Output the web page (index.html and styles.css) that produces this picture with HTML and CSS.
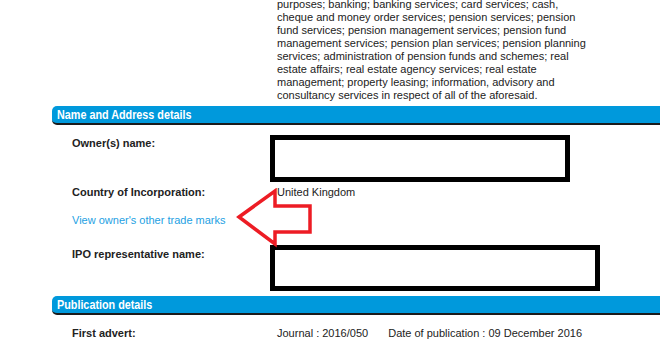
FILE: index.html
```html
<!DOCTYPE html>
<html>
<head>
    <meta charset="UTF-8">
    <title>Trade mark details</title>
    <link rel="stylesheet" href="styles.css">
</head>
<body>
    <div class="page">
        <div class="row goods-row">
            <div class="label"></div>
            <div class="value goods-text">purposes; banking; banking services; card services; cash, cheque and money order services; pension services; pension fund services; pension management services; pension fund management services; pension plan services; pension planning services; administration of pension funds and schemes; real estate affairs; real estate agency services; real estate management; property leasing; information, advisory and consultancy services in respect of all of the aforesaid.</div>
        </div>

        <h2 class="section-title"><span>Name and Address details</span></h2>

        <div class="row owner-row">
            <div class="label">Owner(s) name:</div>
            <div class="value"><div class="redacted owner-box"></div></div>
        </div>
        <div class="row country-row">
            <div class="label">Country of Incorporation:</div>
            <div class="value">United Kingdom</div>
        </div>
        <div class="row link-row">
            <a class="owner-link" href="#">View owner's other trade marks</a>
        </div>
        <div class="row ipo-row">
            <div class="label">IPO representative name:</div>
            <div class="value"><div class="redacted ipo-box"></div></div>
        </div>

        <h2 class="section-title publication-title"><span>Publication details</span></h2>

        <div class="row advert-row">
            <div class="label">First advert:</div>
            <div class="value">
                <span>Journal : 2016/050</span>
                <span class="pub-date">Date of publication : 09 December 2016</span>
            </div>
        </div>

        <!-- annotation arrow -->
        <svg class="pointer" width="80" height="62" viewBox="0 0 80 62">
            <polygon points="3,29 39,3 39,18 74,18 74,44 39,44 39,56" fill="none" stroke="#ed1c24" stroke-width="3.5" stroke-linejoin="miter"/>
        </svg>
    </div>
</body>
</html>
```

FILE: styles.css
```css
body {
    margin: 0;
    font-family: "Liberation Sans", Arial, sans-serif;
    font-size: 11px;
    line-height: 13px;
    color: #222;
    background: #fff;
    overflow: hidden;
}

.page {
    position: relative;
    padding-left: 52px;
}

.row {
    display: flex;
    align-items: flex-start;
    padding-left: 20px;
}

.label {
    width: 205px;
    flex-shrink: 0;
    font-weight: bold;
}

.value {
    flex: 1;
}

.goods-row {
    margin-top: -2px;
}

.goods-text {
    flex: none;
    width: 314px;
}

.section-title {
    margin: 4px 0 0 0;
    height: 17px;
    padding-left: 5px;
    background: #0099dc;
    border-bottom: 2px solid #1b1b1b;
    border-radius: 5px 0 0 5px;
    color: #fff;
    font-size: 13px;
    font-weight: bold;
    line-height: 17px;
}

/* the original uses a narrow face here */
.section-title span {
    display: inline-block;
    transform: scaleX(0.83);
    transform-origin: left center;
    white-space: nowrap;
}

.owner-row {
    margin-top: 10px;
}

.owner-row .label {
    padding-top: 2px;
}

.redacted {
    margin-left: -7px;
    border: 5px solid #000;
    box-sizing: border-box;
    background: #fff;
}

.owner-box {
    width: 300px;
    height: 47px;
}

.country-row {
    margin-top: 4px;
}

.link-row {
    margin-top: 15px;
}

.owner-link {
    color: #1e9fe3;
    text-decoration: none;
}

.ipo-row {
    margin-top: 18px;
}

.ipo-row .label {
    padding-top: 3px;
}

.ipo-box {
    width: 330px;
    height: 46px;
}

.publication-title {
    margin-top: 5px;
}

.advert-row {
    margin-top: 12px;
}

.pub-date {
    margin-left: 17px;
}

.pointer {
    position: absolute;
    left: 236px;
    top: 190px;
}
```
